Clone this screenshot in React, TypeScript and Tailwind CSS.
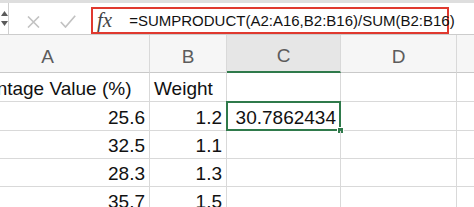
import React from "react";

const GRID = "border-[#d9d9d9]";

type Row = {
  h: string;
  a: string;
  b: string;
  c?: string;
  text?: boolean;
  selected?: boolean;
};

const rows: Row[] = [
  { h: "h-[29px]", a: "Percentage Value (%)", b: "Weight", text: true },
  { h: "h-[29px]", a: "25.6", b: "1.2", c: "30.7862434", selected: true },
  { h: "h-[28px]", a: "32.5", b: "1.1" },
  { h: "h-[28px]", a: "28.3", b: "1.3" },
  { h: "h-[28px]", a: "35.7", b: "1.5" },
];

function FormulaBar() {
  return (
    <div className="flex h-[32px] items-start border-b border-[#cccccc]">
      {/* name box spinner */}
      <div className="flex h-full w-[9px] shrink-0 flex-col items-center justify-center gap-[5px] border-r border-[#d0d0d0]">
        <svg width="7" height="5" viewBox="0 0 7 5">
          <path d="M0 5 L3.5 0 L7 5 Z" fill="#5a5a5a" />
        </svg>
        <svg width="7" height="5" viewBox="0 0 7 5">
          <path d="M0 0 L3.5 5 L7 0 Z" fill="#5a5a5a" />
        </svg>
      </div>

      {/* cancel */}
      <svg className="ml-[18px] mt-[13px] shrink-0" width="13" height="12" viewBox="0 0 13 12">
        <path d="M1 0.5 L12 11.5 M12 0.5 L1 11.5" stroke="#c2c2c2" strokeWidth="1.6" fill="none" />
      </svg>

      {/* enter */}
      <svg className="ml-[20px] mt-[12px] shrink-0" width="16" height="13" viewBox="0 0 16 13">
        <path d="M0.8 7 L5.5 12 L15.2 0.8" stroke="#c2c2c2" strokeWidth="1.7" fill="none" />
      </svg>

      {/* formula box */}
      <div className="ml-[15px] mt-[4px] flex h-[27px] w-[358px] shrink-0 items-center border-2 border-[#e0392f] bg-white">
        <span className="ml-[4px] w-[17px] font-['Liberation_Serif',serif] text-[21px] italic leading-none text-[#454545]">
          fx
        </span>
        <span className="ml-[9px] h-[17px] w-px bg-[#d6d6d6]" />
        <span className="ml-[8px] whitespace-nowrap text-[15px] leading-none text-[#111]">
          =SUMPRODUCT(A2:A16,B2:B16)/SUM(B2:B16)
        </span>
      </div>
    </div>
  );
}

function HeaderRow() {
  const base = `flex h-[38px] shrink-0 items-center justify-center border-r pt-[5px] text-[19px] leading-none text-[#5c5c5c] ${GRID}`;
  return (
    <div className="flex">
      <div className={`${base} -ml-[54px] w-[204px] border-b border-b-[#c9c9c9] bg-[#f6f6f6]`}>A</div>
      <div className={`${base} w-[77px] border-b border-b-[#c9c9c9] bg-[#f6f6f6]`}>B</div>
      <div className={`${base} w-[114px] border-b-2 border-b-[#2f7a4b] bg-[#e6e6e6]`}>C</div>
      <div className={`${base} w-[116px] border-b border-b-[#c9c9c9] bg-[#f6f6f6]`}>D</div>
      <div className={`${base} w-[60px] border-b border-b-[#c9c9c9] bg-[#f6f6f6]`} />
    </div>
  );
}

function DataRow({ row }: { row: Row }) {
  const cell = `flex shrink-0 items-end border-b border-r pb-[3px] text-[19px] leading-none text-[#111] whitespace-nowrap overflow-hidden ${GRID}`;
  const alignA = row.text ? "justify-start pl-[1px]" : "justify-end pr-[4px]";
  const alignB = row.text ? "justify-start pl-[4px]" : "justify-end pr-[4px]";
  return (
    <div className={`flex ${row.h}`}>
      <div className={`${cell} ${alignA} -ml-[54px] w-[204px]`}>{row.a}</div>
      <div className={`${cell} ${alignB} w-[77px]`}>{row.b}</div>
      <div className={`${cell} relative w-[114px] justify-end overflow-visible pr-[4px]`}>
        {row.c}
        {row.selected ? (
          <>
            <div className="absolute -bottom-[1px] -left-[1px] -right-[1px] -top-[1px] border-2 border-[#2f7a4b]" />
            <div className="absolute -bottom-[4px] -right-[4px] h-[7px] w-[7px] border border-white bg-[#2f7a4b]" />
          </>
        ) : null}
      </div>
      <div className={`${cell} w-[116px]`} />
      <div className={`${cell} w-[60px]`} />
    </div>
  );
}

export default function App() {
  return (
    <div className="h-[207px] w-[474px] overflow-hidden bg-white font-['Liberation_Sans',Arial,sans-serif]">
      <div className="h-[3px] bg-[#dedede]" />
      <FormulaBar />
      <HeaderRow />
      {rows.map((row, i) => (
        <DataRow key={i} row={row} />
      ))}
    </div>
  );
}
